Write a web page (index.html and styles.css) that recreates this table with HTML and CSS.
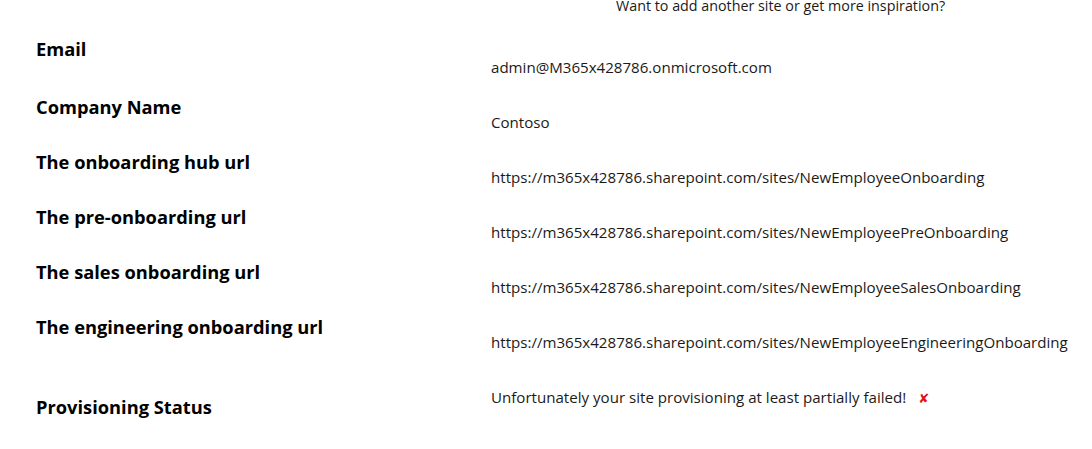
FILE: index.html
```html
<!DOCTYPE html>
<html lang="en">
<head>
<meta charset="utf-8">
<title>Provisioning summary</title>
<link rel="stylesheet" href="styles.css">
</head>
<body>
<div class="topline">Want to add another site or get more inspiration?</div>
<div class="summary">
  <div class="row">
    <div class="label label--first">Email</div>
    <div class="value">admin@M365x428786.onmicrosoft.com</div>
  </div>
  <div class="row">
    <div class="label">Company Name</div>
    <div class="value">Contoso</div>
  </div>
  <div class="row">
    <div class="label">The onboarding hub url</div>
    <div class="value">https://m365x428786.sharepoint.com/sites/NewEmployeeOnboarding</div>
  </div>
  <div class="row">
    <div class="label">The pre-onboarding url</div>
    <div class="value">https://m365x428786.sharepoint.com/sites/NewEmployeePreOnboarding</div>
  </div>
  <div class="row">
    <div class="label">The sales onboarding url</div>
    <div class="value">https://m365x428786.sharepoint.com/sites/NewEmployeeSalesOnboarding</div>
  </div>
  <div class="row">
    <div class="label">The engineering onboarding url</div>
    <div class="value">https://m365x428786.sharepoint.com/sites/NewEmployeeEngineeringOnboarding</div>
  </div>
  <div class="row">
    <div class="label label--low">Provisioning Status</div>
    <div class="value">Unfortunately your site provisioning at least partially failed!<span class="fail">&#10008;</span></div>
  </div>
</div>
</body>
</html>
```
FILE: styles.css
```css
html, body {
  margin: 0;
  padding: 0;
  background: #ffffff;
}

body {
  font-family: "Open Sans", "Noto Sans", "Liberation Sans", sans-serif;
  color: #000000;
  width: 1092px;
  height: 449px;
  overflow: hidden;
}

.topline {
  height: 12px;
  line-height: 11px;
  font-size: 14.3px;
  padding-left: 616px;
  color: #1b1a19;
  white-space: nowrap;
}

.summary {
  padding-top: 23px;
  padding-left: 36px;
  display: flex;
  flex-direction: column;
}

.row {
  height: 55px;
  display: grid;
  grid-template-columns: 455px 1fr;
  align-items: start;
}

.label {
  margin-top: 5px;
  font-size: 18.3px;
  line-height: 24px;
  font-weight: 700;
  white-space: nowrap;
}

.label--first {
  margin-top: 2px;
}

.label--low {
  margin-top: 30px;
}

.value {
  margin-top: 22px;
  font-size: 15.1px;
  line-height: 20px;
  color: #1b1a19;
  white-space: nowrap;
}

.fail {
  display: inline-block;
  margin-left: 12px;
  font-family: "DejaVu Sans", sans-serif;
  font-size: 13px;
  color: #e8111a;
}
```
